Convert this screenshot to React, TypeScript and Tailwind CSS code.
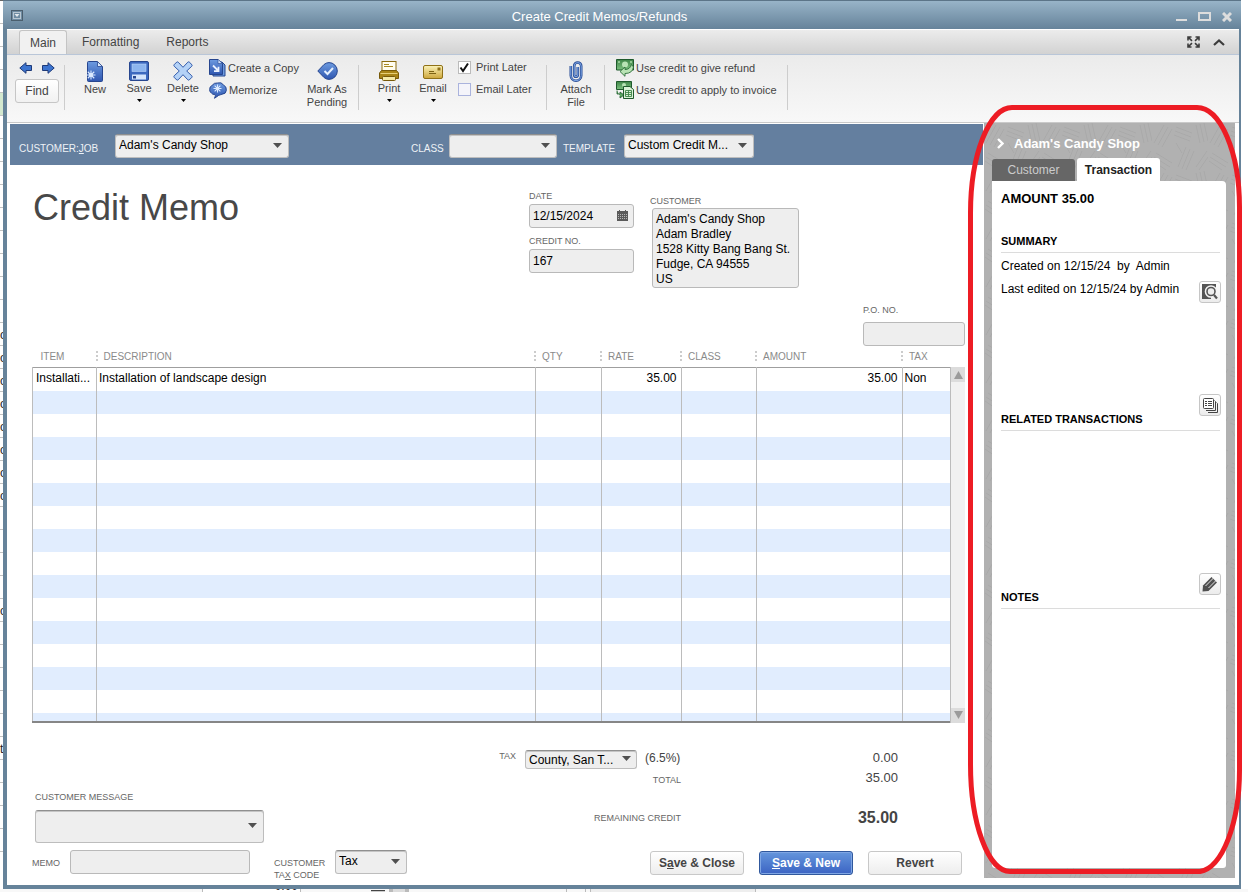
import { useState, type ReactNode } from "react";

const ROWS = Array.from({ length: 15 }, (_, i) => i);
const BACKDROP_ROWS = Array.from({ length: 38 }, (_, i) => i);

function Caret({ className = "" }: { className?: string }) {
  return (
    <svg className={className} width="9" height="5" viewBox="0 0 9 5" aria-hidden="true">
      <path d="M0 0H9L4.5 5Z" fill="#505050" />
    </svg>
  );
}

function Dropdown({ id, value, className, caret = "right-[7px]", label }: { id: string; value: string; className: string; caret?: string; label?: string }) {
  return (
    <div className={"relative " + className}>
      <select
        id={id}
        aria-label={label}
        className="block h-full w-full appearance-none rounded-[3px] border border-[#bdbdbd] border-t-[#8f8f8f] bg-[#eee] pr-4 pb-[2px] pl-[3px] text-[12px] text-black shadow-[inset_0_1px_0_#c4c4c4]"
      >
        <option>{value}</option>
      </select>
      <Caret className={"pointer-events-none absolute top-1/2 -mt-[3px] " + caret} />
    </div>
  );
}

function Divider({ className }: { className: string }) {
  return <div className={"mt-2 h-[45px] w-px shrink-0 bg-[#cdcdcd] " + className} />;
}

function ToolButton({ icon, children, menu, className = "w-11" }: { icon: ReactNode; children: ReactNode; menu?: boolean; className?: string }) {
  return (
    <button className={"mt-[3px] flex shrink-0 flex-col items-center text-[11px] leading-[13px] text-[#444] " + className}>
      <span className="flex h-[22px] items-center">{icon}</span>
      <span className={menu ? "" : "mt-px"}>{children}</span>
      {menu && (
        <svg className="mt-1" width="5" height="3" viewBox="0 0 5 3" aria-hidden="true">
          <path d="M0 0H5L2.5 3Z" fill="#000" />
        </svg>
      )}
    </button>
  );
}

function InlineTool({ icon, children }: { icon: ReactNode; children: ReactNode }) {
  return (
    <button className="flex h-[22px] items-center gap-[2px] text-[11px] whitespace-nowrap text-[#444]">
      {icon}
      {children}
    </button>
  );
}

function Gradients() {
  return (
    <svg width="0" height="0" className="absolute" aria-hidden="true">
      <defs>
        <linearGradient id="blue" x1="0" y1="0" x2="0" y2="1">
          <stop offset="0" stopColor="#6d9be0" />
          <stop offset="1" stopColor="#2f56b0" />
        </linearGradient>
        <linearGradient id="gold" x1="0" y1="0" x2="0" y2="1">
          <stop offset="0" stopColor="#fbf3b8" />
          <stop offset="1" stopColor="#cda63a" />
        </linearGradient>
        <linearGradient id="green" x1="0" y1="0" x2="0" y2="1">
          <stop offset="0" stopColor="#3f8548" />
          <stop offset="1" stopColor="#7cc07f" />
        </linearGradient>
      </defs>
    </svg>
  );
}

const ArrowIcon = ({ right }: { right?: boolean }) => (
  <svg width="14" height="12" viewBox="0 0 14 12">
    <path
      d={right ? "M7 .7 13.2 6 7 11.3V8.5H1.5V3.5H7Z" : "M7 .7 .8 6 7 11.3V8.5H12.5V3.5H7Z"}
      fill="#3c74cf"
      stroke="#1e3a78"
    />
  </svg>
);

const Star = ({ x, y, r, c = "#dcebff" }: { x: number; y: number; r: number; c?: string }) => (
  <g transform={`translate(${x} ${y})`} stroke={c} strokeWidth="1.1">
    <path d={`M0 ${-r}V${r}M${-r} 0H${r}M${-r * 0.72} ${-r * 0.72}L${r * 0.72} ${r * 0.72}M${-r * 0.72} ${r * 0.72}L${r * 0.72} ${-r * 0.72}`} />
    <circle r={r * 0.3} fill={c} />
  </g>
);

const NewIcon = (
  <svg width="18" height="21" viewBox="0 0 18 21">
    <path d="M1.5 1.5Q1.5 .5 2.5 .5H11.5L16.5 5.5V19.5Q16.5 20.5 15.5 20.5H2.5Q1.5 20.5 1.5 19.5Z" fill="url(#blue)" stroke="#27468f" />
    <path d="M11.5 1V5.5H16" fill="#dce9fb" stroke="#27468f" strokeWidth=".8" />
    <Star x={5} y={14} r={4.5} />
  </svg>
);

const SaveIcon = (
  <svg width="20" height="20" viewBox="0 0 20 20">
    <rect x=".5" y=".5" width="19" height="19" rx="1.5" fill="#3c69bf" stroke="#27468f" />
    <rect x="3" y="3" width="14" height="7.5" fill="#8db5ee" stroke="#bcd5f8" strokeWidth=".6" />
    <rect x="3" y="13.5" width="14" height="5" fill="#d5e5fb" />
    <rect x="4" y="15" width="3" height="2.5" fill="#27468f" />
  </svg>
);

const DeleteIcon = (
  <svg width="20" height="20" viewBox="0 0 20 20">
    <path
      d="M1 3.8 3.8 1Q4.5 .6 5.2 1.2L10 6.3 14.8 1.2Q15.5 .6 16.2 1L19 3.8Q19.4 4.5 18.8 5.2L13.7 10 18.8 14.8Q19.4 15.5 19 16.2L16.2 19Q15.5 19.4 14.8 18.8L10 13.7 5.2 18.8Q4.5 19.4 3.8 19L1 16.2Q.6 15.5 1.2 14.8L6.3 10 1.2 5.2Q.6 4.5 1 3.8Z"
      fill="#b4d2f7"
      stroke="#345cab"
    />
  </svg>
);

const CopyIcon = (
  <svg width="17" height="18" viewBox="0 0 17 18">
    <path d="M4 3H13L16 6V17H4Z" fill="#6f9ce0" stroke="#27468f" />
    <path d="M.5 .5H9L13.5 4.5V15.5H.5Z" fill="url(#blue)" stroke="#27468f" />
    <path d="M9 .8V4.5H13" fill="#cfe0fa" stroke="#27468f" strokeWidth=".6" />
    <path d="M4 6.5 9 11.5M9.5 7.8V12.2H5" fill="none" stroke="#e9f2ff" strokeWidth="1.8" />
  </svg>
);

const MemorizeIcon = (
  <svg width="18" height="17" viewBox="0 0 18 17">
    <path d="M3 3.5Q5 .5 8.5 1 12.500 -.3 14.5 3 17.8 4.5 17.3 8.5 17 12 13 12.2 10 12.5 5.5 16.3 7 13.5 6 12.3 3.500 13 2.5 11 .3 10 .7 7.5 .5 4.5 3 3.5Z" fill="url(#blue)" stroke="#27468f" />
    <Star x={8.5} y={6.5} r={4} />
  </svg>
);

const MarkIcon = (
  <svg width="21" height="18" viewBox="0 0 21 18">
    <path d="M.8 9 7 2.5Q9.500 .6 12 .6A8.300 8.400 0 0 1 12 17.4Q9.500 17.4 7 15.5Z" fill="url(#blue)" stroke="#27468f" />
    <path d="M7.5 9 10.5 12 16 6" fill="none" stroke="#e5f0ff" strokeWidth="2" />
  </svg>
);

const PrintIcon = (
  <svg width="20" height="20" viewBox="0 0 20 20">
    <rect x="3" y=".5" width="14" height="11" fill="#fffdf0" stroke="#8a6a10" />
    <path d="M5 3.5H10M5 5.500H14" stroke="#a98924" />
    <path d="M2.5 9.5H17.5L19.5 12V17.5H.5V12Z" fill="#a98518" stroke="#775a0a" />
    <path d="M1.5 12.5H18.5" stroke="#e6cf78" />
    <rect x="3.5" y="15.5" width="13" height="4" rx="1" fill="#f5eaa8" stroke="#775a0a" />
  </svg>
);

const EmailIcon = (
  <svg className="mt-[2px]" width="20" height="14" viewBox="0 0 20 14">
    <rect x=".5" y=".5" width="19" height="13" rx="1.5" fill="url(#gold)" stroke="#8f7118" />
    <rect x="14.5" y="2.5" width="3" height="3" fill="#8f7118" />
    <path d="M6 6.5H11M6 8.5H13" stroke="#7d6212" />
  </svg>
);

const ClipIcon = (
  <svg width="14" height="21" viewBox="0 0 14 21" fill="none">
    <path d="M1.8 5V14.5A5.2 5.2 0 0 0 12.2 14.5V5A3.5 3.5 0 0 0 5.2 5V14A1.8 1.8 0 0 0 8.8 14V6" stroke="#274a94" strokeWidth="2.6" />
    <path d="M1.8 5V14.5A5.2 5.2 0 0 0 12.2 14.5V5A3.5 3.5 0 0 0 5.2 5V14A1.8 1.8 0 0 0 8.8 14V6" stroke="#82aae8" strokeWidth="1" />
  </svg>
);

const RefundIcon = (
  <svg width="18" height="18" viewBox="0 0 18 18">
    <path d="M.5 .5H17.5V11H.5Z" fill="url(#green)" stroke="#1f5a2c" />
    <circle cx="9" cy="5.5" r="3" fill="#b9e3b5" />
    <circle cx="3" cy="3" r="1" fill="#a9d8a6" />
    <circle cx="15" cy="3" r="1" fill="#a9d8a6" />
    <path d="M4 12.5 9 8V10.5Q14 10.5 15.5 5.5L17.5 8Q16.5 14.5 9 14.5V17.3Z" fill="#b9e3b5" stroke="#2b6e38" strokeWidth=".9" />
  </svg>
);

const InvoiceIcon = (
  <svg width="18" height="18" viewBox="0 0 18 18">
    <path d="M.5 .5H15.5V8.5H.5Z" fill="url(#green)" stroke="#1f5a2c" />
    <circle cx="8" cy="4" r="2" fill="#b9e3b5" />
    <path d="M1 9.5V13H4V11L8 14 4 17V15" fill="#5aa562" stroke="#1f5a2c" strokeWidth=".8" />
    <path d="M7.5 5.5H14L17.5 8.5V17.5H7.5Z" fill="#d9f2d6" stroke="#1f5a2c" />
    <path d="M9.5 9.5H15.5V15.5H9.5ZM9.5 11.5H15.5M9.5 13.5H15.5M12.5 9.5V15.5" fill="none" stroke="#3f8548" strokeWidth=".9" />
  </svg>
);

function TitleBar() {
  return (
    <header className="flex h-[29px] items-center border-t border-[#5c7588] bg-linear-to-b from-[#98b4c8] to-[#66839a] pr-[9px] pl-2 text-[#e6e6e6]">
      <button aria-label="Window menu">
        <svg width="12" height="11" viewBox="0 0 12 11">
          <rect x=".5" y=".5" width="11" height="10" fill="#6f8ca2" stroke="#4b5f6e" />
          <rect x="2.5" y="2.5" width="7" height="6" fill="none" stroke="#b8c6d1" />
          <path d="M3.5 4H8.5L6 7Z" fill="#e3e9ee" />
        </svg>
      </button>
      <h2 className="flex-1 pt-[3px] text-center text-[13px] leading-[18px] text-white">Create Credit Memos/Refunds</h2>
      <div className="flex items-center gap-[10px] pt-[3px]">
        <button aria-label="Minimize">
          <svg width="12" height="12" viewBox="0 0 12 12"><rect y="8" width="11" height="2" fill="#ddd" /></svg>
        </button>
        <button aria-label="Maximize">
          <svg width="14" height="12" viewBox="0 0 14 12"><rect x="1" y="2" width="11" height="7" fill="none" stroke="#ddd" strokeWidth="2" /></svg>
        </button>
        <button aria-label="Close">
          <svg width="10" height="10" viewBox="0 0 10 10"><path d="M1 1 9 9M9 1 1 9" stroke="#ddd" strokeWidth="3" /></svg>
        </button>
      </div>
    </header>
  );
}

function LaterCheckbox({ label, initial, boxClass }: { label: string; initial: boolean; boxClass: string }) {
  const [checked, setChecked] = useState(initial);
  return (
    <label className="flex h-[22px] items-center gap-[5px] whitespace-nowrap">
      <span className="relative flex size-[13px]">
        <input
          type="checkbox"
          checked={checked}
          onChange={(e) => setChecked(e.target.checked)}
          className={"size-[13px] appearance-none border " + boxClass}
        />
        {checked && (
          <svg className="pointer-events-none absolute inset-0" width="13" height="13" viewBox="0 0 13 13">
            <path d="M2.5 6.5 5 10 10 2.5" fill="none" stroke="#111" strokeWidth="2" />
          </svg>
        )}
      </span>
      {label}
    </label>
  );
}

function Ribbon() {
  return (
    <>
      <nav className="flex h-[25px] items-end border-t border-white bg-linear-to-b from-[#ececec] to-[#d2d2d2] pl-3 text-[12px] text-[#444]">
        <button className="z-10 h-6 w-12 rounded-t-[3px] border border-b-0 border-[#c4c4c4] bg-[#f1f1f1]">Main</button>
        <button className="h-6 pr-[10px] pl-[15px]">Formatting</button>
        <button className="h-6 pl-[17px]">Reports</button>
        <div className="ml-auto flex h-6 items-center gap-[13px] pr-[14px]">
          <button aria-label="Full view">
            <svg width="13" height="12" viewBox="0 0 13 12" fill="none" stroke="#3c3c3c" strokeWidth="1.6">
              <path d="M1 4.5V1H4.5M1 1 5 4.8M8.5 1H12V4.5M12 1 8 4.8M1 7.5V11H4.5M1 11 5 7.2M8.5 11H12V7.5M12 11 8 7.2" />
            </svg>
          </button>
          <button aria-label="Collapse ribbon">
            <svg width="12" height="7" viewBox="0 0 12 7"><path d="M1 6 6 1.5 11 6" fill="none" stroke="#3c3c3c" strokeWidth="2.2" /></svg>
          </button>
        </div>
      </nav>
      <div className="flex h-[69px] items-start border-t border-b border-t-[#b9c6d8] border-b-[#c9c9c9] bg-linear-to-b from-[#ebebeb] to-[#f8f8f8] pt-[2px] pl-2">
        <div className="flex w-11 shrink-0 flex-col pt-[5px]">
          <div className="flex justify-between px-1">
            <button aria-label="Previous"><ArrowIcon /></button>
            <button aria-label="Next"><ArrowIcon right /></button>
          </div>
          <button className="mt-[5px] h-6 rounded-[3px] border border-[#c6c6c6] bg-linear-to-b from-white to-[#f1f1f1] text-[12px] text-[#444]">Find</button>
        </div>
        <Divider className="ml-[5px]" />
        <ToolButton icon={NewIcon} className="ml-2 w-11">New</ToolButton>
        <ToolButton icon={SaveIcon} menu>Save</ToolButton>
        <ToolButton icon={DeleteIcon} menu>Delete</ToolButton>
        <div className="ml-1 w-[89px] shrink-0">
          <InlineTool icon={CopyIcon}>Create a Copy</InlineTool>
          <InlineTool icon={MemorizeIcon}>Memorize</InlineTool>
        </div>
        <ToolButton icon={MarkIcon} className="w-[58px]">Mark As<br />Pending</ToolButton>
        <Divider className="ml-[2px]" />
        <ToolButton icon={PrintIcon} menu className="ml-2 w-11">Print</ToolButton>
        <ToolButton icon={EmailIcon} menu>Email</ToolButton>
        <div className="-mt-px ml-[3px] w-20 shrink-0 text-[11px] text-[#444]">
          <LaterCheckbox label="Print Later" initial={true} boxClass="border-[#bbb] bg-white" />
          <LaterCheckbox label="Email Later" initial={false} boxClass="border-[#aab3dd] bg-[#f4f4fa]" />
        </div>
        <Divider className="ml-2" />
        <ToolButton icon={ClipIcon} className="ml-[7px] w-11">Attach<br />File</ToolButton>
        <Divider className="ml-[6px]" />
        <div className="ml-[11px] w-[163px] shrink-0">
          <InlineTool icon={RefundIcon}>Use credit to give refund</InlineTool>
          <InlineTool icon={InvoiceIcon}>Use credit to apply to invoice</InlineTool>
        </div>
        <Divider className="ml-2" />
      </div>
    </>
  );
}

const labelClass = "block text-[9px] leading-3 text-[#666] whitespace-nowrap";
const fieldClass = "rounded-[3px] border border-[#b9b9b9] bg-[#eee] text-[12px] text-black";

function HeaderCell({ children, first }: { children: ReactNode; first?: boolean }) {
  return (
    <th className="p-0 text-left font-normal">
      <span className={"flex h-5 items-center text-[10px] text-[#8a8a8a] " + (first ? "pl-2" : "")}>
        {!first && (
          <svg className="-ml-px mr-[6px]" width="2" height="12" viewBox="0 0 2 12" aria-hidden="true">
            <path d="M1 0V12" stroke="#999" strokeDasharray="2 2" />
          </svg>
        )}
        <span>{children}</span>
      </span>
    </th>
  );
}

function ItemsTable() {
  const cell = "h-[23px] border-l border-[#bcbcbc] pt-0 pb-[2px] overflow-hidden whitespace-nowrap ";
  return (
    <div className="mt-px flex">
      <table className="w-full table-fixed border-collapse text-[12px] leading-4 text-black">
        <colgroup>
          <col className="w-16" />
          <col />
          <col className="w-[66px]" />
          <col className="w-20" />
          <col className="w-[75px]" />
          <col className="w-[146px]" />
          <col className="w-12" />
        </colgroup>
        <thead>
          <tr>
            <HeaderCell first>ITEM</HeaderCell>
            <HeaderCell>DESCRIPTION</HeaderCell>
            <HeaderCell>QTY</HeaderCell>
            <HeaderCell>RATE</HeaderCell>
            <HeaderCell>CLASS</HeaderCell>
            <HeaderCell>AMOUNT</HeaderCell>
            <HeaderCell>TAX</HeaderCell>
          </tr>
        </thead>
        <tbody className="border-t border-b-2 border-t-[#9f9f9f] border-b-[#868686]">
          {ROWS.map((r) => (
            <tr key={r} className={r % 2 ? "bg-[#e1edfe]" : "bg-white"}>
              <td className={cell + "pl-[3px]"}>{r === 0 && "Installati..."}</td>
              <td className={cell + "pl-[2px]"}>{r === 0 && "Installation of landscape design"}</td>
              <td className={cell} />
              <td className={cell + "pr-1 text-right"}>{r === 0 && "35.00"}</td>
              <td className={cell} />
              <td className={cell + "pr-1 text-right"}>{r === 0 && "35.00"}</td>
              <td className={cell + "pl-[2px]"}>{r === 0 && "Non"}</td>
            </tr>
          ))}
          <tr className="bg-[#e1edfe]">
            {[0, 1, 2, 3, 4, 5, 6].map((c) => (
              <td key={c} className="h-[9px] border-l border-[#bcbcbc] p-0" />
            ))}
          </tr>
        </tbody>
      </table>
      <div className="mt-5 flex w-[15px] shrink-0 flex-col justify-between border-l border-[#bcbcbc] bg-[#f1f1f1]">
        <button aria-label="Scroll up" className="flex h-[15px] items-center justify-center bg-[#dcdcdc]">
          <svg width="9" height="8" viewBox="0 0 9 8"><path d="M4.5 0 9 8H0Z" fill="#9b9b9b" /></svg>
        </button>
        <button aria-label="Scroll down" className="flex h-[15px] items-center justify-center bg-[#dcdcdc]">
          <svg width="9" height="8" viewBox="0 0 9 8"><path d="M4.5 8 9 0H0Z" fill="#9b9b9b" /></svg>
        </button>
      </div>
    </div>
  );
}

function MemoForm() {
  return (
    <main className="min-w-0 flex-1">
      <div className="mt-px mr-px ml-[3px] flex h-[41px] items-center bg-[#647f9f] pt-[3px] pl-[9px] text-[10px] text-[#eef2f6]">
        <label htmlFor="customer-job" className="w-24 pt-1">CUSTOMER:<u>J</u>OB</label>
        <Dropdown id="customer-job" value="Adam's Candy Shop" className="h-6 w-[174px]" />
        <label htmlFor="class" className="ml-[122px] w-[38px] pt-1">CLASS</label>
        <Dropdown id="class" value="" className="h-6 w-[108px]" />
        <label htmlFor="template" className="ml-[6px] w-[61px] pt-1">TEMPLATE</label>
        <Dropdown id="template" value="Custom Credit M..." className="h-6 w-[130px]" />
      </div>
      <div className="pr-[19px] pl-[25px]">
        <div className="flex items-start pt-[25px]">
          <h1 className="flex-1 pl-px text-[36px] leading-[36px] text-[#484848]">Credit Memo</h1>
          <div className="w-[105px]">
            <label htmlFor="date" className={labelClass}>DATE</label>
            <div className="relative mt-[2px]">
              <input id="date" defaultValue="12/15/2024" className={"block h-6 w-full pl-[3px] " + fieldClass} />
              <svg className="pointer-events-none absolute top-[6px] right-[6px]" width="11" height="11" viewBox="0 0 11 11">
                <path d="M0 1H2V0H3V1H8V0H9V1H11V11H0Z" fill="#5a5a5a" />
                <path d="M1 4.5H10M1 6.5H10M1 8.5H10" stroke="#b5b5b5" strokeDasharray="1 1" />
              </svg>
            </div>
            <label htmlFor="credit-no" className={"mt-[7px] " + labelClass}>CREDIT NO.</label>
            <input id="credit-no" defaultValue="167" className={"mt-[2px] block h-6 w-full pl-[3px] " + fieldClass} />
          </div>
          <div className="ml-4 w-[149px] pt-[5px]">
            <label htmlFor="customer" className={labelClass}>CUSTOMER</label>
            <textarea
              id="customer"
              defaultValue={"Adam's Candy Shop\nAdam Bradley\n1528 Kitty Bang Bang St.\nFudge, CA 94555\nUS"}
              className={"mt-px ml-[2px] block h-20 w-[147px] resize-none overflow-hidden pt-[3px] pl-[3px] leading-[15px] whitespace-pre " + fieldClass}
            />
          </div>
          <div className="ml-16 w-[102px] pt-[114px]">
            <label htmlFor="po" className={labelClass}>P.O. NO.</label>
            <input id="po" className={"mt-[6px] block h-6 w-full px-1 " + fieldClass} />
          </div>
        </div>
        <ItemsTable />
        <div className="flex justify-between">
          <div className="pt-[68px]">
            <div className="pl-[3px]">
              <label htmlFor="message" className={labelClass}>CUSTOMER MESSAGE</label>
              <Dropdown id="message" value="" className="mt-[7px] h-[33px] w-[229px]" />
            </div>
            <div className="mt-[7px] flex items-start">
              <label htmlFor="memo" className={"w-[38px] pt-[7px] " + labelClass}>MEMO</label>
              <input id="memo" className={"h-6 w-[180px] px-1 " + fieldClass} />
              <label htmlFor="tax-code" className={"ml-6 w-[61px] pt-[7px] " + labelClass}>CUSTOMER<br />TA<u>X</u> CODE</label>
              <Dropdown id="tax-code" value="Tax" className="h-6 w-[72px]" />
            </div>
          </div>
          <div className="text-[#444]">
            <div className="flex h-[46px] items-end justify-end pr-[67px] text-[12px]">
              <label htmlFor="tax" className={"mr-[9px] pb-[7px] " + labelClass}>TAX</label>
              <Dropdown id="tax" value="County, San T..." className="h-[19px] w-[112px]" caret="right-[6px]" />
              <span className="ml-2 w-9 pb-[2px]">(6.5%)</span>
              <span className="w-[217px] pb-px text-right text-[13px]">0.00</span>
            </div>
            <div className="flex h-[19px] items-center justify-end pr-[67px]">
              <span className={labelClass + " pt-[3px]"}>TOTAL</span>
              <span className="w-[217px] text-right text-[13px]">35.00</span>
            </div>
            <div className="mt-5 flex h-5 items-center justify-end pr-[67px]">
              <span className={labelClass}>REMAINING CREDIT</span>
              <span className="w-[217px] text-right text-[16px] font-bold">35.00</span>
            </div>
            <div className="mt-[23px] flex justify-end gap-[15px] pr-[3px] text-[12px] font-bold">
              <button className="h-6 w-[94px] rounded-[3px] border border-[#c8c8c8] bg-linear-to-b from-white to-[#ededed]">S<u>a</u>ve &amp; Close</button>
              <button className="h-6 w-[94px] rounded-[3px] border border-[#30589d] bg-linear-to-b from-[#6596dc] to-[#3c63c3] text-white shadow-[inset_0_0_0_1px_#7fa6e4]"><u>S</u>ave &amp; New</button>
              <button className="h-6 w-[94px] rounded-[3px] border border-[#c8c8c8] bg-linear-to-b from-white to-[#ededed]">Revert</button>
            </div>
          </div>
        </div>
      </div>
    </main>
  );
}

function PanelButton({ label, children }: { label: string; children: ReactNode }) {
  return (
    <button aria-label={label} className="-mr-px flex size-[22px] shrink-0 items-center justify-center rounded-[3px] border border-[#c6c6c6] bg-linear-to-b from-white to-[#ececec]">
      {children}
    </button>
  );
}

function SidePanel() {
  const heading = "text-[11px] leading-[14px] font-bold text-black";
  return (
    <aside className="relative mr-1 mb-[7px] flex w-[251px] shrink-0 flex-col bg-[#b1b1b1] pr-[9px] pb-[10px] pl-2">
      <svg className="absolute inset-0 h-full w-full" aria-hidden="true">
        <defs>
          <pattern id="hatch" width="56" height="48" patternUnits="userSpaceOnUse">
            <path
              d="M2 20 12 2M6 22 16 4M10 24 20 6M24 4 40 10M23 8 39 14M22 12 38 18M44 2 48 20M48 1 52 19M52 0 56 18M4 30 20 40M2 34 18 44M1 38 14 47M26 44 34 24M30 46 38 26M34 47 42 28M44 44 55 28M47 47 56 34M24 20 30 30"
              stroke="#a9a9a9"
              fill="none"
            />
          </pattern>
        </defs>
        <rect width="100%" height="100%" fill="url(#hatch)" />
      </svg>
      <div className="relative flex h-[35px] items-center gap-[10px] pt-[6px] pl-[5px]">
        <button aria-label="Hide panel">
          <svg width="7" height="11" viewBox="0 0 7 11"><path d="M1 1 5.5 5.5 1 10" fill="none" stroke="#fff" strokeWidth="2.4" /></svg>
        </button>
        <h3 className="text-[13px] font-bold text-white">Adam's Candy Shop</h3>
      </div>
      <div className="relative flex h-[23px] items-end gap-[2px] text-[12px]">
        <button className="h-[22px] w-[83px] rounded-t-[3px] bg-[#666] text-[#ccc]">Customer</button>
        <button className="h-[23px] w-[83px] rounded-t-[3px] bg-white font-bold text-[#222]">Transaction</button>
      </div>
      <div className="relative flex-1 rounded-tr-[4px] rounded-b-[3px] bg-white pt-[9px] pr-[6px] pl-[9px] text-[12px] leading-4 text-black">
        <p className="text-[13px] leading-[18px] font-bold">AMOUNT 35.00</p>
        <h4 className={"mt-[26px] border-b border-[#dcdcdc] pb-1 " + heading}>SUMMARY</h4>
        <p className="mt-[5px] whitespace-pre">Created on 12/15/24  by  Admin</p>
        <div className="mt-[7px] flex justify-between">
          <p>Last edited on 12/15/24 by Admin</p>
          <PanelButton label="View history">
            <svg width="16" height="16" viewBox="0 0 16 16">
              <path d="M0 0H14V15H0Z" fill="#555" />
              <path d="M9 12.500H14V15.500H9Z" fill="#eee" />
              <circle cx="9" cy="7.5" r="4.500" fill="#eee" stroke="#f4f4f4" strokeWidth="3.600" />
              <circle cx="9" cy="7.5" r="4" fill="#eee" stroke="#555" strokeWidth="1.6" />
              <path d="M12 11 15 14.5" stroke="#555" strokeWidth="2.2" />
            </svg>
          </PanelButton>
        </div>
        <div className="mt-[91px] flex h-[37px] items-start justify-between border-b border-[#dcdcdc]">
          <h4 className={"self-end pb-1 " + heading}>RELATED TRANSACTIONS</h4>
          <PanelButton label="Related transactions">
            <svg width="15" height="15" viewBox="0 0 15 15" fill="none" stroke="#444">
              <path d="M5 14.500H14.500V5.500L13.500 4.500M3 12.500H12.500V3.500L11.500 2.500" />
              <rect x=".5" y=".5" width="10" height="10" rx="1" fill="#fff" />
              <path d="M2 3.500H4M5 3.500H9M2 5.500H4M5 5.500H9M2 7.500H4M5 7.500H9" />
            </svg>
          </PanelButton>
        </div>
        <div className="mt-[142px] flex h-9 items-start justify-between border-b border-[#dcdcdc]">
          <h4 className={"self-end pb-1 " + heading}>NOTES</h4>
          <PanelButton label="Edit notes">
            <svg width="16" height="16" viewBox="0 0 16 16">
              <path d="M.5 15.500 1 9.500 9.500 1 15 6.500 6.500 15Z" fill="#505050" />
              <path d="M3.5 10 11.5 2M6.500 12 14 4.500" stroke="#e4e4e4" />
            </svg>
          </PanelButton>
        </div>
      </div>
      <svg className="pointer-events-none absolute -top-5 -left-[18px]" width="280" height="775" viewBox="966 103 280 775" fill="none" aria-hidden="true">
        <path
          d="M1012 107.5H1197A42.5 100 0 0 1 1239.5 207.5V770A42.5 101.5 0 0 1 1200 871.5H1010A39.5 107 0 0 1 970.5 764.5V213A41.5 105.5 0 0 1 1012 107.5Z"
          stroke="#ed1c24"
          strokeWidth="5"
        />
      </svg>
    </aside>
  );
}

function BackdropStrip() {
  return (
    <div className="w-[3px] shrink-0 overflow-hidden bg-white text-[12px] leading-6 text-[#222]" aria-hidden="true">
      {BACKDROP_ROWS.map((r) => (
        <div key={r} className={"h-[23px] overflow-hidden border-t " + (r === 0 ? "border-[#666]" : "border-[#c2c2c2]") + (r === 4 ? " bg-[#d3e8cf]" : "")}>
          {(r >= 14 && r <= 21) || r === 26 ? "o" : r === 32 ? "t" : ""}
        </div>
      ))}
    </div>
  );
}

export default function App() {
  return (
    <div className="flex min-h-screen flex-col bg-white font-['Liberation_Sans',Arial,sans-serif]">
      <Gradients />
      <div className="flex flex-1 pr-[7px]">
        <BackdropStrip />
        <div className="flex min-w-0 flex-1 flex-col rounded-tl-[4px] bg-[#66839a]">
          <TitleBar />
          <div className="mr-[2px] mb-1 ml-1 flex flex-1 flex-col bg-white">
            <Ribbon />
            <div className="flex flex-1">
              <MemoForm />
              <SidePanel />
            </div>
          </div>
        </div>
      </div>
      <div className="flex h-[3px] items-end overflow-hidden bg-[#f8f8f8] pl-[202px] text-[12px] leading-3 text-[#222]" aria-hidden="true">
        <span className="flex w-[99px] justify-end border-x border-[#bbb] bg-white pr-[2px]">0.00</span>
        <span className="ml-[70px] h-[2px] w-[14px] border-t border-[#444] bg-[#ccc]" />
        <span className="ml-1 h-[3px] w-5 border-x-4 border-[#bbb] bg-[#ddd]" />
        <span className="ml-[157px] h-[3px] w-5 border-x border-[#bbb]" />
        <span className="ml-[4px] h-[3px] w-[166px] border-x border-[#bbb] bg-[#eee]" />
      </div>
    </div>
  );
}
